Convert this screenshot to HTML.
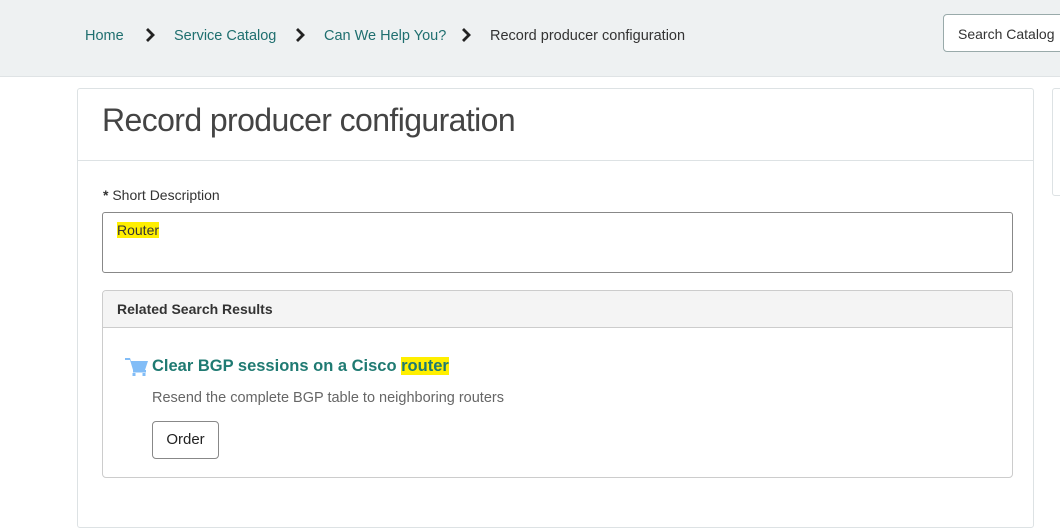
<!DOCTYPE html>
<html><head><meta charset="utf-8"><style>
body{margin:0;width:1060px;height:513px;overflow:hidden;background:#fff;font-family:"Liberation Sans",sans-serif;position:relative}
.top{position:absolute;left:0;top:0;width:1060px;height:76px;background:#eef1f2;border-bottom:1px solid #dfe3e5}
.bc{position:absolute;top:28px;font-size:14.5px;color:#1f6f6f;white-space:nowrap}
.chev{position:absolute;top:27px}
.search{position:absolute;left:943px;top:14px;width:130px;height:38px;box-sizing:border-box;border:1px solid #9aa;border-radius:4px;background:#fff;font-size:14px;color:#333;padding:11px 0 0 14px;white-space:nowrap}
.card{position:absolute;left:77px;top:88px;width:957px;height:440px;box-sizing:border-box;border:1px solid #dde2e4;border-radius:3px}
.side{position:absolute;left:1052px;top:88px;width:20px;height:106px;border:1px solid #dde2e4;border-radius:3px}
.title{position:absolute;left:102px;top:102px;font-size:32px;font-weight:300;color:#444;letter-spacing:-0.6px;white-space:nowrap}
.hr{position:absolute;left:78px;top:160px;width:955px;height:1px;background:#dde2e4}
.lbl{position:absolute;left:103px;top:187px;font-size:14px;color:#333;white-space:nowrap}
.inp{position:absolute;left:102px;top:212px;width:911px;height:61px;box-sizing:border-box;border:1px solid #888;border-radius:3px}
.hl{background:#ffef00}
.rs{position:absolute;left:102px;top:290px;width:911px;height:188px;box-sizing:border-box;border:1px solid #ccc;border-radius:4px;overflow:hidden}
.rsh{height:37px;background:#f4f4f4;border-bottom:1px solid #ccc;font-size:14px;font-weight:bold;color:#333;padding:10px 0 0 14px;box-sizing:border-box}
.link{position:absolute;left:152px;top:357px;font-size:16.5px;font-weight:bold;color:#1f7a72;white-space:nowrap}
.desc{position:absolute;left:152px;top:390px;font-size:14.5px;color:#666;white-space:nowrap}
.btn{position:absolute;left:152px;top:421px;width:67px;height:38px;box-sizing:border-box;border:1px solid #888;border-radius:4px;font-size:15px;color:#222;text-align:center;line-height:36px}
</style></head><body>
<div class="top"></div>
<div class="bc" style="left:85px">Home</div>
<svg class="chev" style="left:145px" width="10" height="16" viewBox="0 0 10 16"><path d="M2 2l6 6-6 6" stroke="#222" stroke-width="2.8" fill="none"/></svg>
<div class="bc" style="left:174px">Service Catalog</div>
<svg class="chev" style="left:295px" width="10" height="16" viewBox="0 0 10 16"><path d="M2 2l6 6-6 6" stroke="#222" stroke-width="2.8" fill="none"/></svg>
<div class="bc" style="left:324px">Can We Help You?</div>
<svg class="chev" style="left:461px" width="10" height="16" viewBox="0 0 10 16"><path d="M2 2l6 6-6 6" stroke="#222" stroke-width="2.8" fill="none"/></svg>
<div class="bc" style="left:490px;color:#333">Record producer configuration</div>
<div class="search">Search Catalog</div>
<div class="card"></div>
<div class="side"></div>
<div class="title">Record producer configuration</div>
<div class="hr"></div>
<div class="lbl"><b>*</b> Short Description</div>
<div class="inp"><span class="hl" style="position:absolute;left:14px;top:9px;font-size:14px;color:#333">Router</span></div>
<div class="rs"><div class="rsh">Related Search Results</div></div>
<svg style="position:absolute;left:125px;top:357px" width="24" height="20" viewBox="0 0 24 20"><path d="M0 1h5l1 3h17l-3 9H8L5 3H0z" fill="#82bdf7"/><rect x="8" y="13" width="13" height="2.5" fill="#82bdf7"/><rect x="7.5" y="16" width="3" height="3" fill="#82bdf7"/><rect x="17.5" y="16" width="3" height="3" fill="#82bdf7"/></svg>
<div class="link">Clear BGP sessions on a Cisco <span class="hl">router</span></div>
<div class="desc">Resend the complete BGP table to neighboring routers</div>
<div class="btn">Order</div>
</body></html>
